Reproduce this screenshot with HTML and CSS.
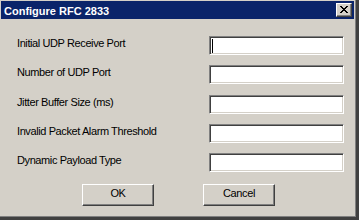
FILE: index.html
```html
<!DOCTYPE html>
<html lang="en">
<head>
    <meta charset="UTF-8">
    <title>Configure RFC 2833</title>
    <link rel="stylesheet" href="styles.css">
</head>
<body>
    <div class="window">
        <div class="frame">
            <div class="titlebar">
                <span class="title">Configure RFC 2833</span>
                <button class="close" type="button">
                    <svg width="8" height="7" viewBox="0 0 8 7">
                        <path d="M0 0h2v1h1v1h2v-1h1v-1h2v1h-1v1h-1v1h-1v1h1v1h1v1h1v1h-2v-1h-1v-1h-2v1h-1v1h-2v-1h1v-1h1v-1h1v-1h-1v-1h-1v-1h-1z" fill="#000"/>
                    </svg>
                </button>
            </div>
            <div class="content">
                <div class="fields">
                    <span class="label">Initial UDP Receive Port</span>
                    <div class="field"><span class="caret"></span></div>
                    <span class="label">Number of UDP Port</span>
                    <div class="field"></div>
                    <span class="label">Jitter Buffer Size (ms)</span>
                    <div class="field"></div>
                    <span class="label">Invalid Packet Alarm Threshold</span>
                    <div class="field"></div>
                    <span class="label">Dynamic Payload Type</span>
                    <div class="field"></div>
                </div>
                <div class="actions">
                    <button class="btn" type="button">OK</button>
                    <button class="btn" type="button">Cancel</button>
                </div>
            </div>
        </div>
    </div>
</body>
</html>
```

FILE: styles.css
```css
body {
    margin: 0;
    background: #d4d0c8;
    font-family: 'Liberation Sans', Arial, sans-serif;
    color: #000;
}
.window {
    width: 359px;
    height: 220px;
    box-sizing: border-box;
    border-right: 3px solid #404040;
    border-bottom: 3px solid #404040;
    background: #d4d0c8;
}
.frame {
    height: 100%;
    box-sizing: border-box;
    border-right: 1px solid #808080;
    border-bottom: 1px solid #808080;
    padding: 1px 1px 0 1px;
}
.titlebar {
    height: 18px;
    background: #0a246a;
    display: flex;
    justify-content: space-between;
    align-items: flex-start;
}
.title {
    color: #fff;
    font-weight: bold;
    font-size: 11px;
    line-height: 16px;
    padding: 2px 0 0 3px;
}
.close {
    width: 16px;
    height: 14px;
    margin: 2px 2px 0 0;
    padding: 0;
    box-sizing: border-box;
    border: 1px solid;
    border-color: #fff #404040 #404040 #fff;
    box-shadow: inset -1px -1px #808080;
    background: #d4d0c8;
    display: flex;
    justify-content: center;
    align-items: center;
}
.close svg {
    display: block;
    margin: 0 1px 1px 0;
}
.content {
    padding: 17px 0 0 16px;
}
.fields {
    display: grid;
    grid-template-columns: 192px 135px;
    grid-auto-rows: 19px;
    row-gap: 10.25px;
}
.label {
    font-size: 11px;
    line-height: 13px;
    padding-top: 1px;
    letter-spacing: -0.4px;
}
.field {
    box-sizing: border-box;
    height: 19px;
    background: #fff;
    border: 1px solid;
    border-color: #808080 #fff #fff #808080;
    box-shadow: inset 1px 1px #404040, inset -1px -1px #d4d0c8;
}
.caret {
    display: block;
    width: 1px;
    height: 14px;
    margin: 2px 0 0 2px;
    background: #000;
}
.actions {
    display: flex;
    gap: 49px;
    margin-top: 12px;
    padding-left: 65px;
}
.btn {
    width: 72px;
    height: 22px;
    box-sizing: border-box;
    padding: 0 0 3px 0;
    border: 1px solid;
    border-color: #fff #404040 #404040 #fff;
    box-shadow: inset -1px -1px #808080;
    background: #d4d0c8;
    font-family: 'Liberation Sans', Arial, sans-serif;
    font-size: 11px;
    line-height: 17px;
    letter-spacing: -0.4px;
    color: #000;
}
```
